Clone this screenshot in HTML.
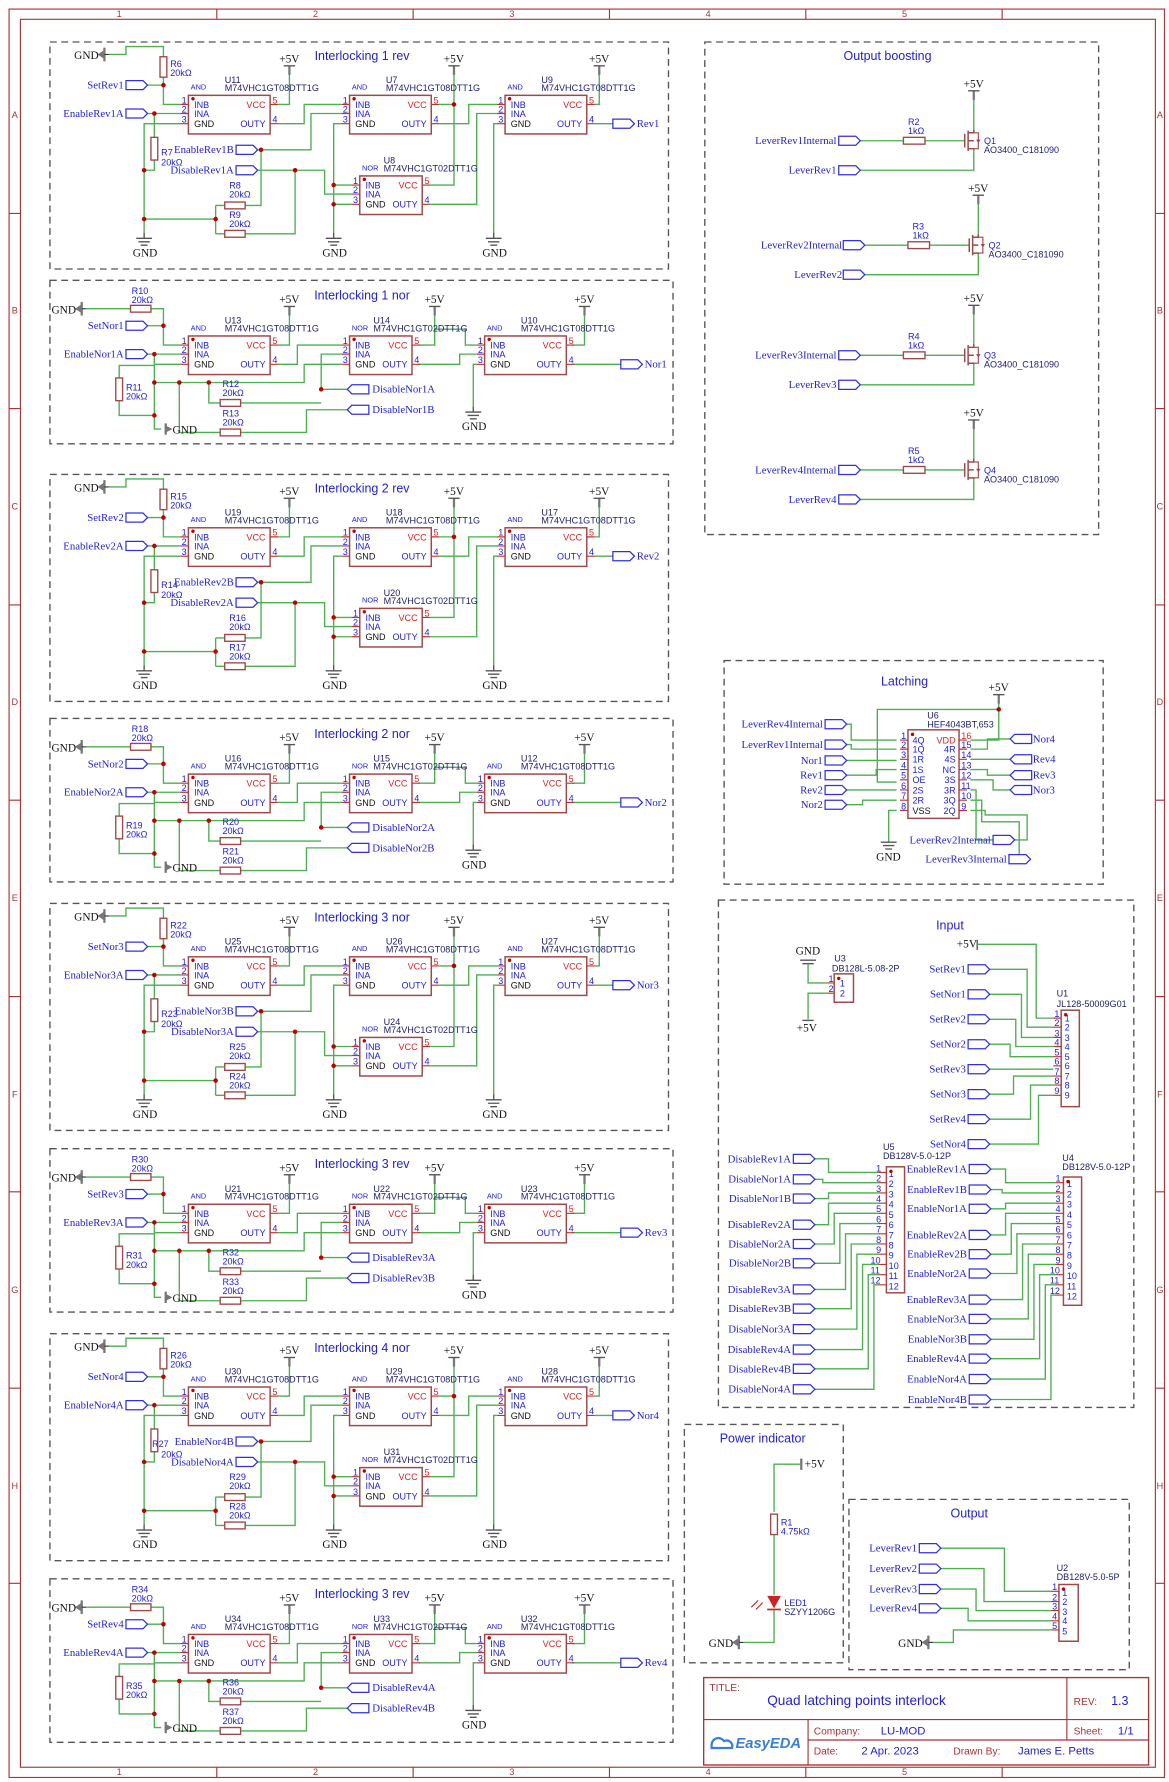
<!DOCTYPE html>
<html><head><meta charset="utf-8"><style>
html,body{margin:0;padding:0;background:#fff;}
svg{display:block;}
.w{fill:none;stroke:#4caf50;stroke-width:1.2}
.r{fill:none;stroke:#a04848;stroke-width:1.2}
.pn{stroke:#c03030;stroke-width:1}
.bx{fill:#fff;stroke:#a04848;stroke-width:1.3}
.dash{fill:none;stroke:#555;stroke-width:1.2;stroke-dasharray:6,4}
.pt{fill:#fff;stroke:#3030e0;stroke-width:1.1}
.s{font-family:"Liberation Serif",serif;font-size:9.5px;fill:#2020e0}
.sk{font-family:"Liberation Serif",serif;font-size:10px;fill:#111}
.c{font-family:"Liberation Sans",sans-serif;font-size:8px;fill:#2020e0}
.cr{font-family:"Liberation Sans",sans-serif;font-size:8px;fill:#e02020}
.ck{font-family:"Liberation Sans",sans-serif;font-size:8px;fill:#111}
.cn{font-family:"Liberation Sans",sans-serif;font-size:8px;fill:#202070}
.sm{font-family:"Liberation Sans",sans-serif;font-size:6.5px;fill:#2020e0}
.t{font-family:"Liberation Sans",sans-serif;font-size:11px;fill:#2020e0;text-anchor:middle}
.e{text-anchor:end}
.dot{fill:#c00000}
.g{stroke:#777;stroke-width:2}
.fr{fill:none;stroke:#a33;stroke-width:1}
.rl{font-family:"Liberation Sans",sans-serif;font-size:8px;fill:#a33;text-anchor:middle}
</style></head><body>
<svg width="1169" height="1782" viewBox="0 0 1030 1570" preserveAspectRatio="none" xmlns="http://www.w3.org/2000/svg" xmlns:xlink="http://www.w3.org/1999/xlink">
<defs>
<g id="and">
<rect class="bx" x="0" y="0" width="72" height="34"/>
<path class="pn" d="M-7 8H0M-7 16H0M-7 25H0M72 8H79M72 25H79"/>
<circle class="dot" cx="4" cy="3" r="1.5"/>
<text class="c" x="-6" y="7">1</text><text class="c" x="-6" y="15">2</text><text class="c" x="-6" y="24">3</text>
<text class="c" x="5" y="11">INB</text><text class="c" x="5" y="19">INA</text><text class="ck" x="5" y="28">GND</text>
<text class="cr e" x="68" y="11">VCC</text><text class="c e" x="68" y="28">OUTY</text>
<text class="cr" x="74" y="7">5</text><text class="c" x="74" y="24">4</text>
<text class="sm" x="2" y="-5">AND</text><text class="cn" x="32" y="-4">M74VHC1GT08DTT1G</text>
</g>
<g id="nor">
<rect class="bx" x="0" y="0" width="55" height="34"/>
<path class="pn" d="M-7 8H0M-7 16H0M-7 25H0M55 8H62M55 25H62"/>
<circle class="dot" cx="4" cy="3" r="1.5"/>
<text class="c" x="-6" y="7">1</text><text class="c" x="-6" y="15">2</text><text class="c" x="-6" y="24">3</text>
<text class="c" x="5" y="11">INB</text><text class="c" x="5" y="19">INA</text><text class="ck" x="5" y="28">GND</text>
<text class="cr e" x="51" y="11">VCC</text><text class="c e" x="51" y="28">OUTY</text>
<text class="cr" x="57" y="7">5</text><text class="c" x="57" y="24">4</text>
<text class="sm" x="2" y="-5">NOR</text><text class="cn" x="21" y="-4">M74VHC1GT02DTT1G</text>
</g>
<g id="gnd"><path d="M0 0V5M-7 5H7M-5 8H5M-3 11H3" stroke="#555" stroke-width="1.2" fill="none"/><text class="sk" x="-10" y="21">GND</text></g>
<g id="p5"><path class="g" d="M0 0V8"/><path d="M-5 0H5" stroke="#555" stroke-width="1.2"/><text class="sk" x="-9" y="-3">+5V</text></g>
<polygon id="pr" class="pt" points="0,-4 15,-4 19,0 15,4 0,4"/>
<polygon id="pl" class="pt" points="0,0 4,-4 19,-4 19,4 4,4"/>
<g id="gl"><path d="M0 -6V6" stroke="#777" stroke-width="2"/><polygon points="0,-4 -6,0 0,4" fill="#777"/><path d="M0 0H4" stroke="#333"/></g>

<g id="revb">
<rect class="dash" x="44" y="37" width="545" height="200"/>
<use xlink:href="#gl" x="92" y="48"/><text class="sk e" x="87" y="52">GND</text>
<path class="w" d="M96 48H111V41H144V50M144 68V92H159M130 75H144M130 100H159M136 100V121M136 141V150H127M159 109H127V205M127 193H190M190 181V206M190 181H198M190 206H198M216 181H230V132M226 132H274V100H301M226 150H286V171H310M216 206H260V150M245 109H268V92H301M245 92H255V64M301 109H294V205M294 163H310M294 180H310M387 92H400V64M400 92V163H379M387 109H413V92H438M379 180H420V100H438M438 109H435V205M524 92H528V64M524 109H540"/>
<rect class="r" x="141" y="50" width="6" height="18"/><rect class="r" x="133" y="121" width="6" height="20"/>
<rect class="r" x="198" y="178" width="18" height="6"/><rect class="r" x="198" y="203" width="18" height="6"/>
<text class="c" x="150" y="67">20kΩ</text><text class="c" x="142" y="146">20kΩ</text>
<text class="c" x="202" y="174">20kΩ</text><text class="c" x="202" y="200">20kΩ</text>
<g class="dot"><circle cx="144" cy="75" r="2"/><circle cx="136" cy="100" r="2"/><circle cx="127" cy="150" r="2"/><circle cx="127" cy="193" r="2"/><circle cx="190" cy="193" r="2"/><circle cx="230" cy="132" r="2"/><circle cx="260" cy="150" r="2"/><circle cx="294" cy="163" r="2"/><circle cx="294" cy="180" r="2"/><circle cx="400" cy="92" r="2"/></g>
<use xlink:href="#and" x="166" y="84"/><use xlink:href="#and" x="308" y="84"/><use xlink:href="#and" x="445" y="84"/><use xlink:href="#nor" x="317" y="155"/>
<use xlink:href="#p5" x="255" y="58"/><use xlink:href="#p5" x="400" y="58"/><use xlink:href="#p5" x="528" y="58"/>
<use xlink:href="#gnd" x="127" y="205"/><use xlink:href="#gnd" x="294" y="205"/><use xlink:href="#gnd" x="435" y="205"/>
<use xlink:href="#pr" x="111" y="75"/><use xlink:href="#pr" x="111" y="100"/><use xlink:href="#pr" x="208" y="132"/><use xlink:href="#pr" x="208" y="150"/><use xlink:href="#pr" x="540" y="109"/>
</g>

<g id="norb">
<rect class="dash" x="44" y="247" width="549" height="144"/>
<use xlink:href="#gl" x="72" y="272"/><text class="sk e" x="67" y="276">GND</text>
<path class="w" d="M76 272H115M133 272H144V304H159M130 287H144M130 312H159M136 312V322H105V333M105 353V366H136V378H142M159 321H136V366M136 337H268V321H301M158 337V381H194M184 337V355H194M212 355H283M283 343V312H301M283 343H306M212 381H270V361H306M245 321H262V304H301M245 304H255V276M369 304H383V276M369 321H405V312H420M383 304V290H410V304H420M420 321H417V358M504 304H515V276M504 321H547"/>
<rect class="r" x="115" y="269" width="18" height="6"/><rect class="r" x="102" y="333" width="6" height="20"/>
<rect class="r" x="194" y="352" width="18" height="6"/><rect class="r" x="194" y="378" width="18" height="6"/>
<text class="c" x="116" y="267">20kΩ</text><text class="c" x="111" y="352">20kΩ</text>
<text class="c" x="196" y="349">20kΩ</text><text class="c" x="196" y="375">20kΩ</text>
<g class="dot"><circle cx="144" cy="287" r="2"/><circle cx="136" cy="312" r="2"/><circle cx="136" cy="366" r="2"/><circle cx="136" cy="337" r="2"/><circle cx="158" cy="337" r="2"/><circle cx="184" cy="337" r="2"/><circle cx="283" cy="343" r="2"/></g>
<use xlink:href="#and" x="166" y="296"/><use xlink:href="#nor" x="308" y="296"/><use xlink:href="#and" x="427" y="296"/>
<use xlink:href="#p5" x="255" y="270"/><use xlink:href="#p5" x="383" y="270"/><use xlink:href="#p5" x="515" y="270"/>
<use xlink:href="#gnd" x="417" y="358"/>
<path d="M146 373V383" stroke="#777" stroke-width="2"/><polygon points="146,375 152,378 146,381" fill="#777"/><text class="sk" x="152" y="382">GND</text>
<use xlink:href="#pr" x="111" y="287"/><use xlink:href="#pr" x="111" y="312"/><use xlink:href="#pl" x="306" y="343"/><use xlink:href="#pl" x="306" y="361"/><use xlink:href="#pr" x="547" y="321"/>
</g>
</defs>

<!-- frame -->
<rect class="fr" x="8" y="8" width="1018" height="1558"/>
<rect class="fr" x="18" y="17" width="1000" height="1540"/>
<path class="fr" d="M191 8V17M364 8V17M537 8V17M710 8V17M883 8V17M191 1557V1566M364 1557V1566M537 1557V1566M710 1557V1566M883 1557V1566M8 188H18M8 360H18M8 533H18M8 705H18M8 878H18M8 1050H18M8 1223H18M8 1395H18M1018 188H1026M1018 360H1026M1018 533H1026M1018 705H1026M1018 878H1026M1018 1050H1026M1018 1223H1026M1018 1395H1026"/>
<g class="rl">
<text x="105" y="15">1</text><text x="278" y="15">2</text><text x="451" y="15">3</text><text x="624" y="15">4</text><text x="797" y="15">5</text>
<text x="105" y="1564">1</text><text x="278" y="1564">2</text><text x="451" y="1564">3</text><text x="624" y="1564">4</text><text x="797" y="1564">5</text>
<text x="13" y="104">A</text><text x="13" y="276">B</text><text x="13" y="449">C</text><text x="13" y="621">D</text><text x="13" y="794">E</text><text x="13" y="967">F</text><text x="13" y="1139">G</text><text x="13" y="1312">H</text>
<text x="1022" y="104">A</text><text x="1022" y="276">B</text><text x="1022" y="449">C</text><text x="1022" y="621">D</text><text x="1022" y="794">E</text><text x="1022" y="967">F</text><text x="1022" y="1139">G</text><text x="1022" y="1312">H</text>
</g>

<!-- rev-style blocks -->
<use xlink:href="#revb"/>
<g>
<text class="t" x="319" y="53">Interlocking 1 rev</text>
<text class="cn" x="198" y="73">U11</text><text class="cn" x="340" y="73">U7</text><text class="cn" x="477" y="73">U9</text><text class="cn" x="338" y="144">U8</text>
<text class="c" x="150" y="59">R6</text><text class="c" x="142" y="137">R7</text><text class="c" x="202" y="166">R8</text><text class="c" x="202" y="192">R9</text>
<text class="s e" x="109" y="78">SetRev1</text><text class="s e" x="109" y="103">EnableRev1A</text><text class="s e" x="206" y="135">EnableRev1B</text><text class="s e" x="206" y="153">DisableRev1A</text><text class="s" x="561" y="112">Rev1</text>
</g>
<use xlink:href="#revb" y="381"/>
<g transform="translate(0,381)">
<text class="t" x="319" y="53">Interlocking 2 rev</text>
<text class="cn" x="198" y="73">U19</text><text class="cn" x="340" y="73">U18</text><text class="cn" x="477" y="73">U17</text><text class="cn" x="338" y="144">U20</text>
<text class="c" x="150" y="59">R15</text><text class="c" x="142" y="137">R14</text><text class="c" x="202" y="166">R16</text><text class="c" x="202" y="192">R17</text>
<text class="s e" x="109" y="78">SetRev2</text><text class="s e" x="109" y="103">EnableRev2A</text><text class="s e" x="206" y="135">EnableRev2B</text><text class="s e" x="206" y="153">DisableRev2A</text><text class="s" x="561" y="112">Rev2</text>
</g>
<use xlink:href="#revb" y="759"/>
<g transform="translate(0,759)">
<text class="t" x="319" y="53">Interlocking 3 nor</text>
<text class="cn" x="198" y="73">U25</text><text class="cn" x="340" y="73">U26</text><text class="cn" x="477" y="73">U27</text><text class="cn" x="338" y="144">U24</text>
<text class="c" x="150" y="59">R22</text><text class="c" x="142" y="137">R23</text><text class="c" x="202" y="166">R25</text><text class="c" x="202" y="192">R24</text>
<text class="s e" x="109" y="78">SetNor3</text><text class="s e" x="109" y="103">EnableNor3A</text><text class="s e" x="206" y="135">EnableNor3B</text><text class="s e" x="206" y="153">DisableNor3A</text><text class="s" x="561" y="112">Nor3</text>
</g>
<use xlink:href="#revb" y="1138"/>
<g transform="translate(0,1138)">
<text class="t" x="319" y="53">Interlocking 4 nor</text>
<text class="cn" x="198" y="73">U30</text><text class="cn" x="340" y="73">U29</text><text class="cn" x="477" y="73">U28</text><text class="cn" x="338" y="144">U31</text>
<text class="c" x="150" y="59">R26</text><text class="c" x="134" y="137">R27</text><text class="c" x="202" y="166">R29</text><text class="c" x="202" y="192">R28</text>
<text class="s e" x="109" y="78">SetNor4</text><text class="s e" x="109" y="103">EnableNor4A</text><text class="s e" x="206" y="135">EnableNor4B</text><text class="s e" x="206" y="153">DisableNor4A</text><text class="s" x="561" y="112">Nor4</text>
</g>

<!-- nor-style blocks -->
<use xlink:href="#norb"/>
<g>
<text class="t" x="319" y="264">Interlocking 1 nor</text>
<text class="cn" x="198" y="285">U13</text><text class="cn" x="329" y="285">U14</text><text class="cn" x="459" y="285">U10</text>
<text class="c" x="116" y="259">R10</text><text class="c" x="111" y="344">R11</text><text class="c" x="196" y="341">R12</text><text class="c" x="196" y="367">R13</text>
<text class="s e" x="109" y="290">SetNor1</text><text class="s e" x="109" y="315">EnableNor1A</text><text class="s" x="328" y="346">DisableNor1A</text><text class="s" x="328" y="364">DisableNor1B</text><text class="s" x="568" y="324">Nor1</text>
</g>
<use xlink:href="#norb" y="386"/>
<g transform="translate(0,386)">
<text class="t" x="319" y="264">Interlocking 2 nor</text>
<text class="cn" x="198" y="285">U16</text><text class="cn" x="329" y="285">U15</text><text class="cn" x="459" y="285">U12</text>
<text class="c" x="116" y="259">R18</text><text class="c" x="111" y="344">R19</text><text class="c" x="196" y="341">R20</text><text class="c" x="196" y="367">R21</text>
<text class="s e" x="109" y="290">SetNor2</text><text class="s e" x="109" y="315">EnableNor2A</text><text class="s" x="328" y="346">DisableNor2A</text><text class="s" x="328" y="364">DisableNor2B</text><text class="s" x="568" y="324">Nor2</text>
</g>
<use xlink:href="#norb" y="765"/>
<g transform="translate(0,765)">
<text class="t" x="319" y="264">Interlocking 3 rev</text>
<text class="cn" x="198" y="285">U21</text><text class="cn" x="329" y="285">U22</text><text class="cn" x="459" y="285">U23</text>
<text class="c" x="116" y="259">R30</text><text class="c" x="111" y="344">R31</text><text class="c" x="196" y="341">R32</text><text class="c" x="196" y="367">R33</text>
<text class="s e" x="109" y="290">SetRev3</text><text class="s e" x="109" y="315">EnableRev3A</text><text class="s" x="328" y="346">DisableRev3A</text><text class="s" x="328" y="364">DisableRev3B</text><text class="s" x="568" y="324">Rev3</text>
</g>
<use xlink:href="#norb" y="1144"/>
<g transform="translate(0,1144)">
<text class="t" x="319" y="264">Interlocking 3 rev</text>
<text class="cn" x="198" y="285">U34</text><text class="cn" x="329" y="285">U33</text><text class="cn" x="459" y="285">U32</text>
<text class="c" x="116" y="259">R34</text><text class="c" x="111" y="344">R35</text><text class="c" x="196" y="341">R36</text><text class="c" x="196" y="367">R37</text>
<text class="s e" x="109" y="290">SetRev4</text><text class="s e" x="109" y="315">EnableRev4A</text><text class="s" x="328" y="346">DisableRev4A</text><text class="s" x="328" y="364">DisableRev4B</text><text class="s" x="568" y="324">Rev4</text>
</g>

<!-- Output boosting -->
<rect class="dash" x="621" y="37" width="347" height="434"/>
<text class="t" x="782" y="53">Output boosting</text>
<defs>
<g id="mos">
<path class="w" d="M0 -40V-10M0 26V10M-55 0H-8"/>
<path d="M-8 -6V6M-5 -8V8M-5 -6H0V-10M-5 6H0V10M-5 0H0" stroke="#a04848" stroke-width="1.3" fill="none"/>
<path d="M0 -6H4V6H0" stroke="#a04848" stroke-width="1" fill="none"/>
<polygon points="2,-1 6,-1 4,2" fill="#a04848"/><circle cx="-3" cy="0" r="1" fill="#a04848"/>
<use xlink:href="#p5" x="0" y="-44"/>
</g>
</defs>
<g id="q1">
<path class="w" d="M757 124H796M815 124H850M757 150H858V132"/>
<rect class="r" x="796" y="121" width="19" height="6"/>
<path class="w" d="M858 84V114"/>
<path d="M850 118V130M853 115V133M853 117H858V114M853 131H858V132M853 124H858" stroke="#a04848" stroke-width="1.3" fill="none"/>
<path d="M858 117H862V131H858" stroke="#a04848" stroke-width="1" fill="none"/><polygon points="860,123 864,123 862,126" fill="#a04848"/>
<use xlink:href="#p5" x="858" y="80"/>
<use xlink:href="#pr" x="739" y="124"/><use xlink:href="#pr" x="739" y="150"/>
</g>
<text class="s e" x="737" y="127">LeverRev1Internal</text><text class="s e" x="737" y="153">LeverRev1</text>
<text class="c" x="800" y="110">R2</text><text class="c" x="800" y="118">1kΩ</text>
<text class="c" x="867" y="127">Q1</text><text class="cn" x="867" y="135">AO3400_C181090</text>
<use xlink:href="#q1" x="4" y="92"/>
<text class="s e" x="742" y="219">LeverRev2Internal</text><text class="s e" x="742" y="245">LeverRev2</text>
<text class="c" x="804" y="202">R3</text><text class="c" x="804" y="210">1kΩ</text>
<text class="c" x="871" y="219">Q2</text><text class="cn" x="871" y="227">AO3400_C181090</text>
<use xlink:href="#q1" x="0" y="189"/>
<text class="s e" x="737" y="316">LeverRev3Internal</text><text class="s e" x="737" y="342">LeverRev3</text>
<text class="c" x="800" y="299">R4</text><text class="c" x="800" y="307">1kΩ</text>
<text class="c" x="867" y="316">Q3</text><text class="cn" x="867" y="324">AO3400_C181090</text>
<use xlink:href="#q1" x="0" y="290"/>
<text class="s e" x="737" y="417">LeverRev4Internal</text><text class="s e" x="737" y="443">LeverRev4</text>
<text class="c" x="800" y="400">R5</text><text class="c" x="800" y="408">1kΩ</text>
<text class="c" x="867" y="417">Q4</text><text class="cn" x="867" y="425">AO3400_C181090</text>

<!-- Latching -->
<rect class="dash" x="638" y="582" width="334" height="197"/>
<text class="t" x="797" y="604">Latching</text>
<path class="w" d="M880 615V625H773V689H790M746 638H750V652H790M746 656H750V660H790M746 670H790M746 683H772V678H790M746 696H790M746 709H760V705H790M790 714H783V742M855 652H880V625M855 660H870V651H890M855 669H890M855 678H870V683H890M855 687H875V696H890M855 696H860V740H875M855 705H865V724H898V757H889M855 714H868V718H905V740H893"/>
<rect class="bx" x="800" y="643" width="45" height="78"/>
<circle class="dot" cx="804" cy="647" r="1.5"/>
<path class="pn" d="M793 652H800M793 660H800M793 669H800M793 678H800M793 687H800M793 696H800M793 705H800M793 714H800M845 652H852M845 660H852M845 669H852M845 678H852M845 687H852M845 696H852M845 705H852M845 714H852"/>
<g class="c"><text x="794" y="651">1</text><text x="794" y="659">2</text><text x="794" y="668">3</text><text x="794" y="677">4</text><text x="794" y="686">5</text><text x="794" y="695">6</text><text x="794" y="704">7</text><text x="794" y="713">8</text>
<text x="804" y="655">4Q</text><text x="804" y="663">1Q</text><text x="804" y="672">1R</text><text x="804" y="681">1S</text><text x="804" y="690">OE</text><text x="804" y="699">2S</text><text x="804" y="708">2R</text><text x="804" y="717" fill="#111">VSS</text>
<text class="e" x="842" y="672">4S</text><text class="e" x="842" y="663">4R</text><text class="e" x="842" y="681">NC</text><text class="e" x="842" y="690">3S</text><text class="e" x="842" y="699">3R</text><text class="e" x="842" y="708">3Q</text><text class="e" x="842" y="717">2Q</text>
<text x="847" y="659">15</text><text x="847" y="668">14</text><text x="847" y="677">13</text><text x="847" y="686">12</text><text x="847" y="695">11</text><text x="847" y="704">10</text><text x="847" y="713">9</text></g>
<text class="cr e" x="842" y="655">VDD</text><text class="cr" x="847" y="651">16</text>
<text class="cn" x="817" y="633">U6</text><text class="cn" x="817" y="641">HEF4043BT,653</text>
<circle class="dot" cx="880" cy="625" r="2"/>
<use xlink:href="#p5" x="880" y="612"/>
<use xlink:href="#pr" x="727" y="638"/><use xlink:href="#pr" x="727" y="656"/><use xlink:href="#pr" x="727" y="670"/><use xlink:href="#pr" x="727" y="683"/><use xlink:href="#pr" x="727" y="696"/><use xlink:href="#pr" x="727" y="709"/>
<text class="s e" x="725" y="641">LeverRev4Internal</text><text class="s e" x="725" y="659">LeverRev1Internal</text><text class="s e" x="725" y="673">Nor1</text><text class="s e" x="725" y="686">Rev1</text><text class="s e" x="725" y="699">Rev2</text><text class="s e" x="725" y="712">Nor2</text>
<use xlink:href="#pl" x="890" y="651"/><use xlink:href="#pl" x="890" y="669"/><use xlink:href="#pl" x="890" y="683"/><use xlink:href="#pl" x="890" y="696"/>
<text class="s" x="910" y="654">Nor4</text><text class="s" x="910" y="672">Rev4</text><text class="s" x="910" y="686">Rev3</text><text class="s" x="910" y="699">Nor3</text>
<use xlink:href="#pr" x="875" y="740"/><use xlink:href="#pr" x="889" y="757"/>
<text class="s e" x="873" y="743">LeverRev2Internal</text><text class="s e" x="887" y="760">LeverRev3Internal</text>
<path d="M776 742H790M778 745H788M780 748H786" stroke="#555" stroke-width="1.2"/><text class="sk" x="772" y="758">GND</text>

<!-- Input -->
<rect class="dash" x="633" y="793" width="366" height="447"/>
<text class="t" x="837" y="819">Input</text>
<text class="sk" x="843" y="835">+5V</text><path d="M861 828V837" stroke="#555" stroke-width="1.2"/>
<path class="w" d="M861 832H913V897H928M872 854H905V905H928M872 876H900V914H928M872 898H895V922H928M872 920H890V931H928M872 942H928M872 964H893V948H928M872 986H908V956H928M872 1008H915V965H928"/>
<rect class="bx" x="935" y="890" width="16" height="85"/><circle class="dot" cx="939" cy="894" r="1.5"/>
<path class="pn" d="M928 897H935M928 905H935M928 914H935M928 922H935M928 931H935M928 939H935M928 948H935M928 956H935M928 965H935"/>
<g class="c"><text x="929" y="896">1</text><text x="929" y="904">2</text><text x="929" y="913">3</text><text x="929" y="921">4</text><text x="929" y="930">5</text><text x="929" y="938">6</text><text x="929" y="947">7</text><text x="929" y="955">8</text><text x="929" y="964">9</text>
<text x="938" y="900">1</text><text x="938" y="908">2</text><text x="938" y="917">3</text><text x="938" y="925">4</text><text x="938" y="934">5</text><text x="938" y="942">6</text><text x="938" y="951">7</text><text x="938" y="959">8</text><text x="938" y="968">9</text></g>
<text class="cn" x="931" y="878">U1</text><text class="cn" x="931" y="887">JL128-50009G01</text>
<g><use xlink:href="#pr" x="853" y="854"/><use xlink:href="#pr" x="853" y="876"/><use xlink:href="#pr" x="853" y="898"/><use xlink:href="#pr" x="853" y="920"/><use xlink:href="#pr" x="853" y="942"/><use xlink:href="#pr" x="853" y="964"/><use xlink:href="#pr" x="853" y="986"/><use xlink:href="#pr" x="853" y="1008"/></g>
<text class="s e" x="851" y="857">SetRev1</text><text class="s e" x="851" y="879">SetNor1</text><text class="s e" x="851" y="901">SetRev2</text><text class="s e" x="851" y="923">SetNor2</text><text class="s e" x="851" y="945">SetRev3</text><text class="s e" x="851" y="967">SetNor3</text><text class="s e" x="851" y="989">SetRev4</text><text class="s e" x="851" y="1011">SetNor4</text>
<text class="sk" x="701" y="841">GND</text><path d="M705 846H719M707 849H717" stroke="#555" stroke-width="1.2"/>
<path class="w" d="M712 849V866H729M729 875H712V898"/>
<rect class="bx" x="735" y="858" width="17" height="25"/><circle class="dot" cx="739" cy="862" r="1.5"/>
<path class="pn" d="M729 866H735M729 875H735"/>
<text class="c" x="730" y="865">1</text><text class="c" x="730" y="874">2</text><text class="c" x="740" y="869">1</text><text class="c" x="740" y="878">2</text>
<text class="cn" x="735" y="847">U3</text><text class="cn" x="733" y="856">DB128L-5.08-2P</text>
<path d="M707 899H717" stroke="#555" stroke-width="1.2"/><text class="sk" x="702" y="909">+5V</text>
<!-- U5 -->
<rect class="bx" x="781" y="1028" width="16" height="111"/><circle class="dot" cx="785" cy="1032" r="1.5"/>
<path class="pn" d="M774 1033H781M774 1042H781M774 1051H781M774 1060H781M774 1069H781M774 1078H781M774 1087H781M774 1096H781M774 1105H781M774 1114H781M774 1123H781M774 1132H781"/>
<g class="c"><text x="772" y="1032">1</text><text x="772" y="1041">2</text><text x="772" y="1050">3</text><text x="772" y="1059">4</text><text x="772" y="1068">5</text><text x="772" y="1077">6</text><text x="772" y="1086">7</text><text x="772" y="1095">8</text><text x="772" y="1104">9</text><text x="767" y="1113">10</text><text x="767" y="1122">11</text><text x="767" y="1131">12</text>
<text x="783" y="1037">1</text><text x="783" y="1046">2</text><text x="783" y="1055">3</text><text x="783" y="1064">4</text><text x="783" y="1073">5</text><text x="783" y="1082">6</text><text x="783" y="1091">7</text><text x="783" y="1100">8</text><text x="783" y="1109">9</text><text x="783" y="1118">10</text><text x="783" y="1127">11</text><text x="783" y="1136">12</text></g>
<text class="cn" x="778" y="1013">U5</text><text class="cn" x="778" y="1021">DB128V-5.0-12P</text>
<path class="w" d="M718 1021H730V1033H774M718 1039H725V1042H774M718 1056H730V1051H774M718 1079H730V1060H774M718 1096H735V1069H774M718 1113H740V1078H774M718 1136H745V1087H774M718 1153H750V1096H774M718 1171H755V1105H774M718 1189H760V1114H774M718 1206H765V1123H774M718 1224H770V1132H774"/>
<g><use xlink:href="#pr" x="699" y="1021"/><use xlink:href="#pr" x="699" y="1039"/><use xlink:href="#pr" x="699" y="1056"/><use xlink:href="#pr" x="699" y="1079"/><use xlink:href="#pr" x="699" y="1096"/><use xlink:href="#pr" x="699" y="1113"/><use xlink:href="#pr" x="699" y="1136"/><use xlink:href="#pr" x="699" y="1153"/><use xlink:href="#pr" x="699" y="1171"/><use xlink:href="#pr" x="699" y="1189"/><use xlink:href="#pr" x="699" y="1206"/><use xlink:href="#pr" x="699" y="1224"/></g>
<g class="s e"><text x="697" y="1024">DisableRev1A</text><text x="697" y="1042">DisableNor1A</text><text x="697" y="1059">DisableNor1B</text><text x="697" y="1082">DisableRev2A</text><text x="697" y="1099">DisableNor2A</text><text x="697" y="1116">DisableNor2B</text><text x="697" y="1139">DisableRev3A</text><text x="697" y="1156">DisableRev3B</text><text x="697" y="1174">DisableNor3A</text><text x="697" y="1192">DisableRev4A</text><text x="697" y="1209">DisableRev4B</text><text x="697" y="1227">DisableNor4A</text></g>
<!-- U4 -->
<rect class="bx" x="937" y="1037" width="16" height="113"/><circle class="dot" cx="941" cy="1041" r="1.5"/>
<path class="pn" d="M930 1042H937M930 1051H937M930 1060H937M930 1069H937M930 1078H937M930 1087H937M930 1096H937M930 1105H937M930 1114H937M930 1123H937M930 1132H937M930 1141H937"/>
<g class="c"><text x="930" y="1041">1</text><text x="930" y="1050">2</text><text x="930" y="1059">3</text><text x="930" y="1068">4</text><text x="930" y="1077">5</text><text x="930" y="1086">6</text><text x="930" y="1095">7</text><text x="930" y="1104">8</text><text x="930" y="1113">9</text><text x="925" y="1122">10</text><text x="925" y="1131">11</text><text x="925" y="1140">12</text>
<text x="940" y="1046">1</text><text x="940" y="1055">2</text><text x="940" y="1064">3</text><text x="940" y="1073">4</text><text x="940" y="1082">5</text><text x="940" y="1091">6</text><text x="940" y="1100">7</text><text x="940" y="1109">8</text><text x="940" y="1118">9</text><text x="940" y="1127">10</text><text x="940" y="1136">11</text><text x="940" y="1145">12</text></g>
<text class="cn" x="936" y="1023">U4</text><text class="cn" x="936" y="1031">DB128V-5.0-12P</text>
<path class="w" d="M873 1030H886V1042H930M873 1048H883V1051H930M873 1065H886V1060H930M873 1088H886V1069H930M873 1105H891V1078H930M873 1122H896V1087H930M873 1145H901V1096H930M873 1162H906V1105H930M873 1180H911V1114H930M873 1197H916V1123H930M873 1215H921V1132H930M873 1233H926V1141H930"/>
<g><use xlink:href="#pr" x="854" y="1030"/><use xlink:href="#pr" x="854" y="1048"/><use xlink:href="#pr" x="854" y="1065"/><use xlink:href="#pr" x="854" y="1088"/><use xlink:href="#pr" x="854" y="1105"/><use xlink:href="#pr" x="854" y="1122"/><use xlink:href="#pr" x="854" y="1145"/><use xlink:href="#pr" x="854" y="1162"/><use xlink:href="#pr" x="854" y="1180"/><use xlink:href="#pr" x="854" y="1197"/><use xlink:href="#pr" x="854" y="1215"/><use xlink:href="#pr" x="854" y="1233"/></g>
<g class="s e"><text x="852" y="1033">EnableRev1A</text><text x="852" y="1051">EnableRev1B</text><text x="852" y="1068">EnableNor1A</text><text x="852" y="1091">EnableRev2A</text><text x="852" y="1108">EnableRev2B</text><text x="852" y="1125">EnableNor2A</text><text x="852" y="1148">EnableRev3A</text><text x="852" y="1165">EnableNor3A</text><text x="852" y="1183">EnableNor3B</text><text x="852" y="1200">EnableRev4A</text><text x="852" y="1218">EnableNor4A</text><text x="852" y="1236">EnableNor4B</text></g>

<!-- Power indicator -->
<rect class="dash" x="603" y="1255" width="140" height="210"/>
<text class="t" x="672" y="1271">Power indicator</text>
<path class="w" d="M682 1332V1290H705M682 1352V1405M682 1418V1447H655"/>
<path d="M706 1285V1295" stroke="#777" stroke-width="2"/><text class="sk" x="709" y="1293">+5V</text>
<rect class="r" x="679" y="1334" width="6" height="18"/>
<text class="c" x="688" y="1344">R1</text><text class="c" x="688" y="1352">4.75kΩ</text>
<polygon points="676,1406 688,1406 682,1417" fill="#d02020"/><path d="M676 1418H688" stroke="#d02020" stroke-width="1.5"/>
<path d="M672 1412L666 1418M668 1410L662 1416" stroke="#d02020" stroke-width="1"/>
<text class="c" x="691" y="1415">LED1</text><text class="cn" x="691" y="1423">SZYY1206G</text>
<use xlink:href="#gl" x="651" y="1447"/><text class="sk e" x="646" y="1451">GND</text>

<!-- Output -->
<rect class="dash" x="748" y="1321" width="247" height="150"/>
<text class="t" x="854" y="1337">Output</text>
<path class="w" d="M829 1364H885V1402H926M829 1382H867V1411H926M829 1400H860V1419H926M829 1417H853V1428H926M822 1447H840V1436H926"/>
<rect class="bx" x="933" y="1396" width="17" height="50"/><circle class="dot" cx="937" cy="1400" r="1.5"/>
<path class="pn" d="M926 1402H933M926 1411H933M926 1419H933M926 1428H933M926 1436H933"/>
<g class="c"><text x="927" y="1401">1</text><text x="927" y="1410">2</text><text x="927" y="1418">3</text><text x="927" y="1427">4</text><text x="927" y="1435">5</text>
<text x="936" y="1406">1</text><text x="936" y="1414">2</text><text x="936" y="1423">3</text><text x="936" y="1431">4</text><text x="936" y="1440">5</text></g>
<text class="cn" x="931" y="1384">U2</text><text class="cn" x="931" y="1392">DB128V-5.0-5P</text>
<use xlink:href="#pr" x="810" y="1364"/><use xlink:href="#pr" x="810" y="1382"/><use xlink:href="#pr" x="810" y="1400"/><use xlink:href="#pr" x="810" y="1417"/>
<text class="s e" x="808" y="1367">LeverRev1</text><text class="s e" x="808" y="1385">LeverRev2</text><text class="s e" x="808" y="1403">LeverRev3</text><text class="s e" x="808" y="1420">LeverRev4</text>
<use xlink:href="#gl" x="818" y="1447"/><text class="sk e" x="813" y="1451">GND</text>

<!-- Title block -->
<rect x="620" y="1478" width="392" height="77" fill="none" stroke="#a33" stroke-width="1.2"/>
<path d="M620 1515H1012M712 1533H1012M940 1478V1533M712 1515V1555" stroke="#a33" stroke-width="1" fill="none"/>
<text x="625" y="1490" font-family="Liberation Sans,sans-serif" font-size="9" fill="#a33">TITLE:</text>
<text x="676" y="1502" font-family="Liberation Sans,sans-serif" font-size="12" fill="#2020e0">Quad latching points interlock</text>
<text x="946" y="1502" font-family="Liberation Sans,sans-serif" font-size="9" fill="#a33">REV:</text>
<text x="979" y="1502" font-family="Liberation Sans,sans-serif" font-size="11" fill="#2020e0">1.3</text>
<text x="717" y="1528" font-family="Liberation Sans,sans-serif" font-size="9" fill="#a33">Company:</text>
<text x="776" y="1528" font-family="Liberation Sans,sans-serif" font-size="10" fill="#2020e0">LU-MOD</text>
<text x="946" y="1528" font-family="Liberation Sans,sans-serif" font-size="9" fill="#a33">Sheet:</text>
<text x="985" y="1528" font-family="Liberation Sans,sans-serif" font-size="10" fill="#2020e0">1/1</text>
<text x="717" y="1546" font-family="Liberation Sans,sans-serif" font-size="9" fill="#a33">Date:</text>
<text x="759" y="1546" font-family="Liberation Sans,sans-serif" font-size="10" fill="#2020e0">2 Apr. 2023</text>
<text x="840" y="1546" font-family="Liberation Sans,sans-serif" font-size="9" fill="#a33">Drawn By:</text>
<text x="897" y="1546" font-family="Liberation Sans,sans-serif" font-size="10" fill="#2020e0">James E. Petts</text>
<path d="M627 1537a6 6 0 0 1 11 -3a5 5 0 0 1 7 6h-18z" fill="none" stroke="#3a7fd5" stroke-width="2"/>
<text x="648" y="1540" font-family="Liberation Sans,sans-serif" font-size="13" font-style="italic" font-weight="bold" fill="#3a7fd5">EasyEDA</text>
</svg>
</body></html>
